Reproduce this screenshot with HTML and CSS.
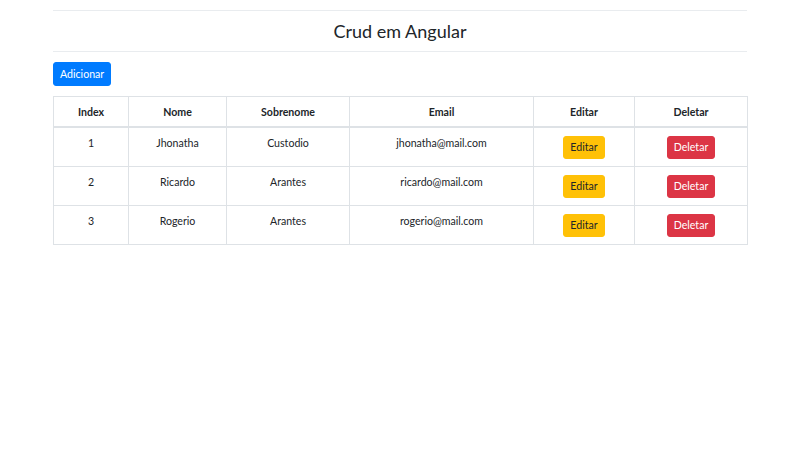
FILE: index.html
```html
<!DOCTYPE html>
<html lang="pt">
<head>
<meta charset="utf-8">
<title>Crud em Angular</title>
<link rel="stylesheet" href="styles.css">
</head>
<body>
<div class="container">
  <header class="page-header">
    <h1 class="title">Crud em Angular</h1>
  </header>
  <div class="toolbar">
    <button class="btn btn-primary">Adicionar</button>
  </div>
  <table class="table">
    <colgroup>
      <col style="width:75px"><col style="width:98px"><col style="width:123px"><col style="width:184px"><col style="width:101px"><col style="width:113px">
    </colgroup>
    <thead>
      <tr><th>Index</th><th>Nome</th><th>Sobrenome</th><th>Email</th><th>Editar</th><th>Deletar</th></tr>
    </thead>
    <tbody>
      <tr><td>1</td><td>Jhonatha</td><td>Custodio</td><td>jhonatha@mail.com</td><td class="act"><button class="btn btn-warning">Editar</button></td><td class="act"><button class="btn btn-danger">Deletar</button></td></tr>
      <tr><td>2</td><td>Ricardo</td><td>Arantes</td><td>ricardo@mail.com</td><td class="act"><button class="btn btn-warning">Editar</button></td><td class="act"><button class="btn btn-danger">Deletar</button></td></tr>
      <tr><td>3</td><td>Rogerio</td><td>Arantes</td><td>rogerio@mail.com</td><td class="act"><button class="btn btn-warning">Editar</button></td><td class="act"><button class="btn btn-danger">Deletar</button></td></tr>
    </tbody>
  </table>
</div>
</body>
</html>
```
FILE: styles.css
```css
html, body { margin: 0; padding: 0; background: #fff; }
body {
  font-family: Lato, "Open Sans", "Liberation Sans", sans-serif;
  font-size: 10.6px;
  color: #212529;
}
.container { width: 694px; margin: 0 auto; padding-top: 10px; }
.page-header {
  border-top: 1px solid #e9ecef;
  border-bottom: 1px solid #e9ecef;
  height: 40px;
  display: flex;
  align-items: center;
  justify-content: center;
}
.title { margin: 0; font-size: 18px; font-weight: 400; line-height: 1; }
.toolbar { margin-top: 10px; margin-bottom: 10px; display: flex; }
.btn {
  font-family: inherit;
  font-size: 10.6px;
  border: 1px solid transparent;
  border-radius: 3px;
  height: 24px;
  padding: 0 6px;
  line-height: 22px;
  cursor: pointer;
}
.btn-primary { background: #007bff; border-color: #007bff; color: #fff; }
.btn-warning { background: #ffc107; border-color: #ffc107; color: #212529; height: 23px; line-height: 21px; padding: 0 6px; }
.btn-danger { background: #dc3545; border-color: #dc3545; color: #fff; height: 23px; line-height: 21px; padding: 0 6px; }
.table {
  width: 694px;
  border-collapse: collapse;
  table-layout: fixed;
}
.table th, .table td {
  border: 1px solid #dee2e6;
  text-align: center;
}
.table th {
  font-weight: 700;
  height: 29px;
  padding: 0 4px;
  border-bottom: 2px solid #dee2e6;
  vertical-align: middle;
}
.table td {
  height: 39.3px;
  padding: 7px 4px 0;
  vertical-align: top;
  line-height: 17px;
  box-sizing: border-box;
}
.table td.act { padding-top: 8px; padding-bottom: 0; vertical-align: top; }
.table td.act .btn { display: inline-block; vertical-align: top; }
```
